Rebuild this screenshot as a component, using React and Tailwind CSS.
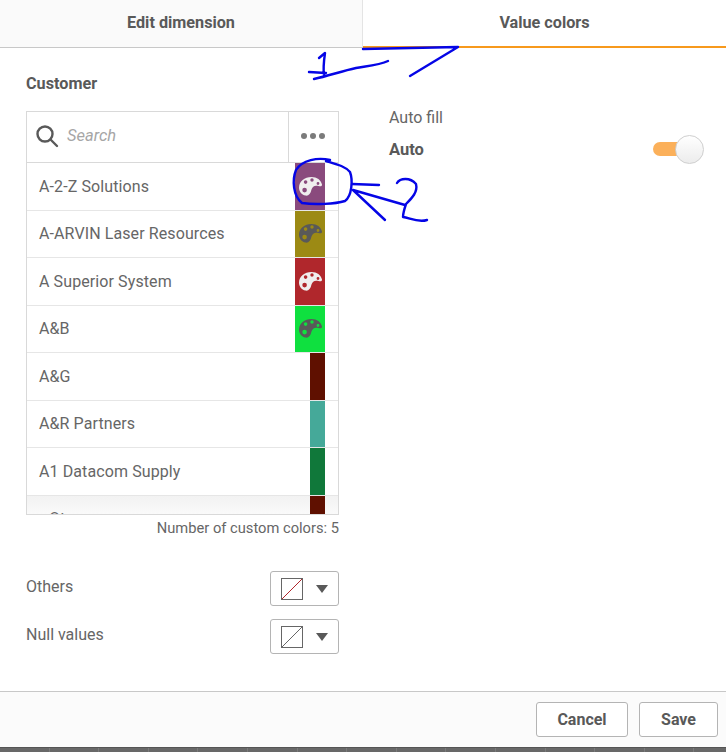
import React from 'react';

const font = { fontFamily: 'Roboto, sans-serif' };

const rows = [
  { name: 'A-2-Z Solutions', color: 'bg-[#8a4a7d]', icon: 'text-[#f0eeee]', custom: true },
  { name: 'A-ARVIN Laser Resources', color: 'bg-[#9c8a14]', icon: 'text-[#595959]', custom: true },
  { name: 'A Superior System', color: 'bg-[#b0272c]', icon: 'text-[#f0eeee]', custom: true },
  { name: 'A&B', color: 'bg-[#0fe03f]', icon: 'text-[#595959]', custom: true },
  { name: 'A&G', color: 'bg-[#5f1000]' },
  { name: 'A&R Partners', color: 'bg-[#45a999]' },
  { name: 'A1 Datacom Supply', color: 'bg-[#10783a]' },
];

const ticks = Array.from({ length: 15 }, (_, i) => i);

const PaletteIcon = ({ className }) => (
  <svg viewBox="0 0 23 19" className={`w-[23px] h-[19px] ${className}`}>
    <path
      fill="currentColor"
      fillRule="evenodd"
      d="M12.5 0C18 0 22 3 23 7.5C23.2 9.5 21.5 9.6 19.5 9C16 8 13.5 9 12.5 12.5C11.5 17 9.5 19.2 6.5 18.6C2.5 17.8 0 14.5 0 10.5C0 4.5 5.5 0 12.5 0ZM5.6 10.8a2.3 2.3 0 1 0 0 4.6a2.3 2.3 0 1 0 0-4.6ZM6.6 3.3a1.8 1.8 0 1 0 0 3.6a1.8 1.8 0 1 0 0-3.6ZM13 1.3a1.7 1.7 0 1 0 0 3.4a1.7 1.7 0 1 0 0-3.4ZM19 5.1a1.4 1.4 0 1 0 0 2.8a1.4 1.4 0 1 0 0-2.8Z"
    />
  </svg>
);

const ColorDrop = ({ line }) => (
  <button className="w-[69px] h-[35px] border border-[#b4b4b4] rounded-[3px] bg-white flex items-center pl-[10px] shrink-0">
    <svg viewBox="0 0 22 22" className="w-[22px] h-[22px]">
      <rect x="0.5" y="0.5" width="21" height="21" fill="white" stroke="#666666" />
      <line x1="1" y1="21" x2="21" y2="1" stroke={line} strokeWidth="1" />
    </svg>
    <svg viewBox="0 0 12 8" className="w-[12px] h-[8px] ml-[13px]">
      <path d="M0 0H12L6 8Z" fill="#595959" />
    </svg>
  </button>
);

export default function App() {
  return (
    <div className="relative w-[726px] h-[752px] bg-white overflow-hidden text-[#595959]" style={font}>
      {/* Tabs */}
      <div className="flex h-[48px]">
        <div className="w-[363px] h-full bg-[#fafafa] border-b border-r border-b-[#c8c8c8] border-r-[#e4e4e4] flex items-center justify-center text-[16.2px] font-bold">
          Edit dimension
        </div>
        <div className="flex-1 h-full border-b-[2px] border-[#f7991c] flex items-center justify-center text-[16.2px] font-bold">
          Value colors
        </div>
      </div>

      <div className="flex h-[643px]">
        {/* Left column */}
        <div className="w-[339px] pl-[26px] shrink-0 text-[#666666]">
          <div className="mt-[26px] text-[16.2px] font-bold leading-[20px] text-[#595959]">Customer</div>

          <div className="mt-[17px] w-[313px] h-[404px] border border-[#d9d9d9] overflow-hidden">
            <div className="flex h-[51px] border-b border-[#d9d9d9]">
              <div className="w-[262px] flex items-center pl-[8px] pb-[3px] border-r border-[#d9d9d9]">
                <svg viewBox="0 0 24 24" className="w-[24px] h-[24px]" fill="none" stroke="#595959" strokeWidth="2.4">
                  <circle cx="10" cy="10" r="7.5" />
                  <path d="M15.5 15.5L22 22" strokeLinecap="round" />
                </svg>
                <span className="ml-[8px] pt-[1px] text-[16.5px] italic text-[#a6a6a6]">Search</span>
              </div>
              <div className="flex-1 pb-[2px] pr-[2px] flex items-center justify-center gap-[3px]">
                <span className="w-[6px] h-[6px] rounded-full bg-[#7b7b7b]" />
                <span className="w-[6px] h-[6px] rounded-full bg-[#7b7b7b]" />
                <span className="w-[6px] h-[6px] rounded-full bg-[#7b7b7b]" />
              </div>
            </div>

            {rows.map((row) => (
              <div key={row.name} className="flex h-[47.5px] border-b border-[#e6e6e6] pl-[12px] pr-[13px]">
                <span className="flex-1 self-center pt-[1px] text-[16px] tracking-[0.1px] leading-[20px]">{row.name}</span>
                <div className={`${row.custom ? 'w-[30px]' : 'w-[15px]'} h-full flex items-center justify-center ${row.color}`}>
                  {row.custom && <PaletteIcon className={row.icon} />}
                </div>
              </div>
            ))}

            <div className="flex h-[30px] pl-[22px] pr-[13px] bg-gradient-to-b from-[#f2f2f2] to-white">
              <span className="flex-1 mt-[13px] text-[16px] leading-[20px]">Ot</span>
              <div className="w-[15px] h-full bg-[#5f1000]" />
            </div>
          </div>

          <div className="mt-[3px] text-right text-[14.7px] leading-[20px]">Number of custom colors: 5</div>

          <div className="mt-[33px] flex items-center justify-between">
            <span className="text-[16px] pb-[3px]">Others</span>
            <ColorDrop line="#b0272c" />
          </div>
          <div className="mt-[13px] flex items-center justify-between">
            <span className="text-[16px] pb-[3px]">Null values</span>
            <ColorDrop line="#666666" />
          </div>
        </div>

        {/* Right column */}
        <div className="flex-1 pl-[50px] pr-[22px] pt-[60px]">
          <div className="text-[16px] leading-[20px] text-[#666666]">Auto fill</div>
          <div className="mt-[11px] flex items-center justify-between h-[20px]">
            <span className="text-[16.5px] font-bold pt-[2px]">Auto</span>
            <div className="relative w-[51px] h-[14px] mr-0">
              <div className="w-[30px] h-[14px] rounded-l-full bg-[#fbb05a]" />
              <div className="absolute right-0 top-[-7px] w-[29px] h-[29px] rounded-full border border-[#cfcfcf] bg-gradient-to-b from-white to-[#ececec]" />
            </div>
          </div>
        </div>
      </div>

      {/* Footer */}
      <div className="h-[56px] border-t border-[#c8c8c8] bg-[#fbfbfb] flex justify-end items-start pt-[10px] pr-[8px] gap-[11px]">
        <button className="w-[92px] h-[35px] border border-[#b4b4b4] rounded-[3px] bg-white text-[16px] font-bold">Cancel</button>
        <button className="w-[79px] h-[35px] border border-[#b4b4b4] rounded-[3px] bg-white text-[16px] font-bold">Save</button>
      </div>
      <div className="absolute left-0 right-0 bottom-0 h-[5px] bg-[#686868] border-t border-[#555555] flex">
        {ticks.map((i) => (
          <span key={i} className="w-[49.6px] shrink-0 border-r border-[#7a7a7a]" />
        ))}
      </div>

      {/* Blue pen annotations */}
      <svg viewBox="0 0 726 752" className="absolute inset-0 w-[726px] h-[752px] pointer-events-none" fill="none" stroke="#0505e6" strokeWidth="2.4" strokeLinecap="round" strokeLinejoin="round">
        <path d="M363 49L458 47L410 76" />
        <path d="M319 58L325 53C324 60 323 68 324 75M309 72L326 73M314 79C328 76 342 71 356 68C368 66 380 65 388 61" />
        <path d="M330 160C318 157 302 160 296 170C292 180 293 196 302 203C315 205 335 204 345 201C352 196 353 180 350 172C345 166 336 164 326 161" />
        <path d="M352 184L379 185M353 190L405 205M353 190L385 220" />
        <path d="M397 183C400 178 410 177 416 184C418 192 412 198 406 204C404 210 403 214 403 217C410 218 418 223 427 220" />
      </svg>
    </div>
  );
}
